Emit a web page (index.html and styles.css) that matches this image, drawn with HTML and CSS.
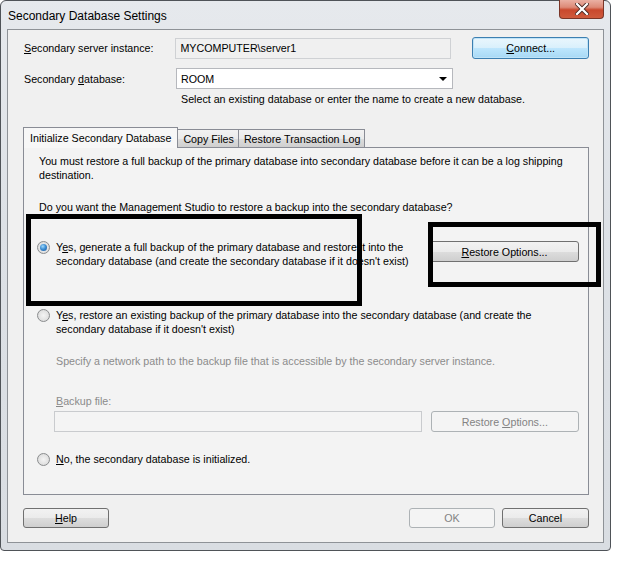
FILE: index.html
```html
<!DOCTYPE html>
<html lang="en">
<head>
    <meta charset="UTF-8">
    <meta name="viewport" content="width=device-width, initial-scale=1.0">
    <title>Secondary Database Settings</title>
    <link rel="stylesheet" href="styles.css">
</head>
<body>

    <div class="window">
        <!-- Title Bar -->
        <div class="titlebar">
            <span class="title">Secondary Database Settings</span>
            <button class="close-btn" aria-label="Close">
                <svg width="14" height="12" viewBox="0 0 14 12">
                    <path d="M2 1 L12 11 M12 1 L2 11" stroke="#4a2a24" stroke-width="4" stroke-linecap="square"/>
                    <path d="M2 1 L12 11 M12 1 L2 11" stroke="#ffffff" stroke-width="2.2" stroke-linecap="square"/>
                </svg>
            </button>
        </div>

        <div class="client">
            <!-- Server / Database Fields -->
            <div class="field-row">
                <label class="field-label"><u>S</u>econdary server instance:</label>
                <div class="textbox readonly">MYCOMPUTER\server1</div>
                <button class="btn btn-default"><u>C</u>onnect...</button>
            </div>
            <div class="field-row second">
                <label class="field-label">Secondary <u>d</u>atabase:</label>
                <div class="textbox combo">ROOM<span class="combo-arrow"></span></div>
            </div>
            <div class="hint">Select an existing database or enter the name to create a new database.</div>

            <!-- Tabs -->
            <div class="tabs">
                <div class="tab active">Initialize Secondary Database</div>
                <div class="tab">Copy Files</div>
                <div class="tab">Restore Transaction Log</div>
            </div>

            <div class="tab-panel">
                <p class="intro">You must restore a full backup of the primary database into secondary database before it can be a log shipping<br>destination.</p>
                <p class="question">Do you want the Management Studio to restore a backup into the secondary database?</p>

                <div class="option first">
                    <span class="radio checked"></span>
                    <div class="option-text">Y<u>e</u>s, generate a full backup of the primary database and restore it into the<br>secondary database (and create the secondary database if it doesn't exist)</div>
                    <button class="btn btn-wide"><u>R</u>estore Options...</button>
                </div>

                <div class="option second">
                    <span class="radio"></span>
                    <div class="option-text">Y<u>e</u>s, restore an existing backup of the primary database into the secondary database (and create the<br>secondary database if it doesn't exist)</div>
                </div>

                <div class="sub disabled-text specify">Specify a network path to the backup file that is accessible by the secondary server instance.</div>
                <div class="sub disabled-text backup-label"><u>B</u>ackup file:</div>
                <div class="backup-row">
                    <div class="textbox disabled"></div>
                    <button class="btn btn-wide" disabled>Restore <u>O</u>ptions...</button>
                </div>

                <div class="option third">
                    <span class="radio"></span>
                    <div class="option-text"><u>N</u>o, the secondary database is initialized.</div>
                </div>
            </div>

            <!-- Dialog Buttons -->
            <div class="footer">
                <button class="btn btn-dialog"><u>H</u>elp</button>
                <div class="footer-right">
                    <button class="btn btn-dialog" disabled>OK</button>
                    <button class="btn btn-dialog">Cancel</button>
                </div>
            </div>
        </div>

        <!-- Highlight boxes drawn over the dialog -->
        <div class="mark mark-option"></div>
        <div class="mark mark-button"></div>
    </div>

</body>
</html>
```

FILE: styles.css
```css
/* Page */
body {
    margin: 0;
    background-color: #ffffff;
    font-family: "Liberation Sans", Arial, sans-serif;
    font-size: 10.7px;
    color: #000000;
}
button {
    font-family: inherit;
    font-size: inherit;
}
/* Window frame */
.window {
    position: relative;
    width: 609px;
    height: 549px;
    border: 1px solid #4f5358;
    border-radius: 6px 6px 4px 4px;
    background: linear-gradient(to bottom, #e6e9ed 0%, #dde1e6 40%, #d9dde2 100%);
}
.titlebar {
    height: 28px;
    display: flex;
    align-items: center;
    justify-content: space-between;
    padding-left: 7px;
}
.title {
    font-size: 12px;
    margin-top: 2px;
}
.close-btn {
    align-self: flex-start;
    width: 45px;
    height: 19px;
    margin-right: 6px;
    margin-top: -1px;
    padding: 0;
    border: 1px solid #7a3527;
    border-top: none;
    border-radius: 0 0 4px 4px;
    background: linear-gradient(to bottom, #eab0a3 0%, #dd8a77 40%, #c9482d 55%, #cf5a3c 100%);
    display: flex;
    align-items: center;
    justify-content: center;
}
.client {
    margin-left: 6px;
    height: 512px;
    border: 1px solid #8e9297;
    background-color: #f0f0f0;
    padding: 0 14px 0 15px;
    box-sizing: content-box;
    width: 566px;
}
/* Fields */
.field-row {
    display: flex;
    align-items: center;
    margin-top: 7px;
}
.field-row.second {
    margin-top: 9px;
}
.field-label {
    width: 153px;
    padding-left: 1px;
    box-sizing: border-box;
}
.textbox {
    width: 277px;
    height: 21px;
    box-sizing: border-box;
    border: 1px solid #abadb3;
    background-color: #ffffff;
    padding-left: 4px;
    display: flex;
    align-items: center;
}
.textbox.readonly {
    background-color: #f0f0f0;
    border-color: #cfd1d4;
}
.combo {
    position: relative;
    border-color: #b6b8bd;
}
.combo-arrow {
    position: absolute;
    right: 5px;
    top: 8px;
    border-left: 4px solid transparent;
    border-right: 4px solid transparent;
    border-top: 4px solid #000000;
}
.hint {
    margin: 3px 0 0 158px;
    line-height: 14px;
}
/* Buttons */
.btn {
    height: 21px;
    box-sizing: border-box;
    border: 1px solid #707070;
    border-radius: 3px;
    background: linear-gradient(to bottom, #f2f2f2 0%, #ebebeb 50%, #dddddd 51%, #cfcfcf 100%);
    color: #000000;
    padding: 0;
}
.btn-default {
    width: 117px;
    height: 22px;
    margin-left: 21px;
    border-color: #3c7fb1;
    background: linear-gradient(to bottom, #eaf6fd 0%, #d9f0fc 50%, #bee6fd 51%, #a7d9f5 100%);
    box-shadow: inset 0 0 0 1px #bfe3f7;
}
.btn:disabled {
    border-color: #adb2b5;
    background: #f4f4f4;
    color: #838383;
}
.btn-wide {
    width: 149px;
}
.btn-dialog {
    width: 87px;
    height: 20px;
}
/* Tabs */
.tabs {
    display: flex;
    align-items: flex-end;
    margin-top: 21px;
    height: 20px;
}
.tab {
    height: 18px;
    box-sizing: border-box;
    border: 1px solid #898c95;
    border-bottom: none;
    margin-left: -1px;
    padding: 0 4px 0 5px;
    display: flex;
    align-items: center;
    background: linear-gradient(to bottom, #f2f2f2 0%, #ebebeb 50%, #dddddd 51%, #cfcfcf 100%);
}
.tab.active {
    height: 21px;
    margin-left: 0;
    margin-bottom: -1px;
    padding: 0 6px 0 6px;
    background: #f7f7f7;
    position: relative;
    z-index: 1;
}
.tab-panel {
    height: 348px;
    box-sizing: border-box;
    border: 1px solid #898c95;
    background-color: #f3f3f3;
    padding: 6px 9px 0 13px;
}
.intro, .question {
    margin: 0 0 0 2px;
    line-height: 14px;
}
.question {
    margin-top: 18px;
}
/* Radio options */
.option {
    display: flex;
    align-items: flex-start;
    line-height: 14px;
}
.option.first {
    margin-top: 26px;
}
.option.second {
    margin-top: 40px;
}
.option.third {
    margin-top: 20px;
}
.radio {
    width: 13px;
    height: 13px;
    box-sizing: border-box;
    margin: 1px 6px 0 0;
    border: 1px solid #8a8c8e;
    border-radius: 50%;
    background: radial-gradient(circle at 50% 50%, #f4f4f4 0%, #e2e2e2 60%, #d0d0d0 100%);
    display: flex;
    align-items: center;
    justify-content: center;
    flex-shrink: 0;
}
.radio.checked::after {
    content: "";
    width: 7px;
    height: 7px;
    border-radius: 50%;
    background: radial-gradient(circle at 40% 35%, #9fd9fb 0%, #3e8fd4 45%, #14529a 100%);
}
.option.first .btn {
    margin-left: auto;
    margin-top: 1px;
}
.sub {
    margin-left: 19px;
    line-height: 14px;
}
.disabled-text {
    color: #8b8b8b;
}
.specify {
    margin-top: 18px;
}
.backup-label {
    margin-top: 26px;
}
.backup-row {
    display: flex;
    margin: 3px 0 0 17px;
}
.backup-row .textbox {
    width: 369px;
    height: 21px;
    border-color: #c9cbce;
    background-color: #f4f4f4;
}
.backup-row .btn {
    margin-left: 9px;
}
/* Footer */
.footer {
    display: flex;
    justify-content: space-between;
    margin-top: 13px;
}
.footer .btn-dialog:first-child {
    width: 86px;
}
.footer-right {
    display: flex;
    gap: 7px;
}
/* Highlight boxes */
.mark {
    position: absolute;
    border: 5px solid #000000;
    box-sizing: border-box;
}
.mark-option {
    left: 25px;
    top: 213px;
    width: 336px;
    height: 92px;
}
.mark-button {
    left: 427px;
    top: 221px;
    width: 173px;
    height: 65px;
}
```
